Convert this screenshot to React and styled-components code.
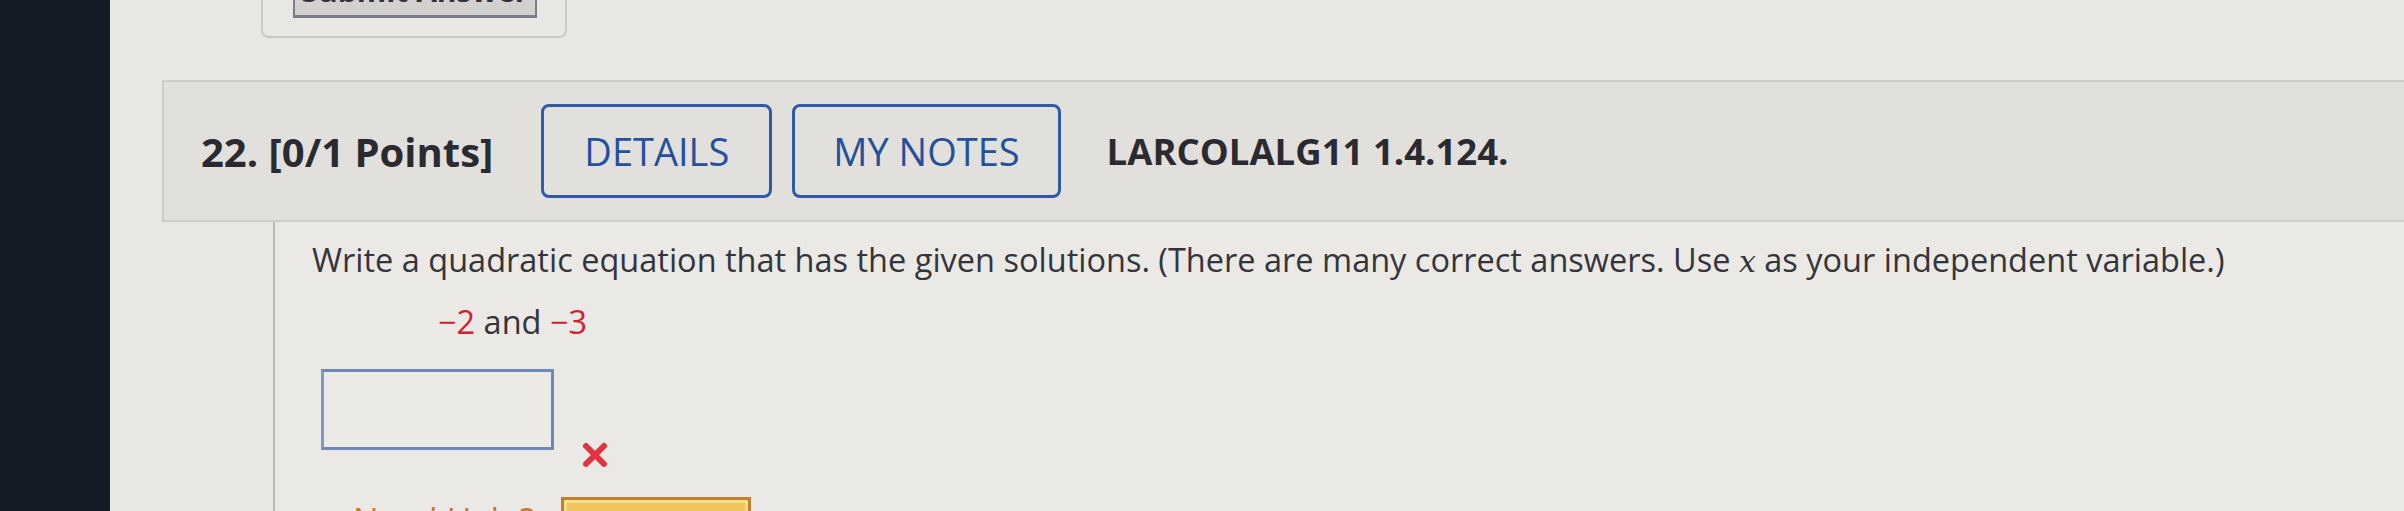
import React from 'react'
import styled, { createGlobalStyle } from 'styled-components'

const GlobalStyle = createGlobalStyle`
  html, body {
    margin: 0;
    padding: 0;
    background: #141b26;
  }
  body {
    font-family: 'Open Sans', 'DejaVu Sans', sans-serif;
    color: #2d2c34;
  }
`;

const Screen = styled.div`
  display: flex;
  height: 511px;
  overflow: hidden;
`;

const Bezel = styled.div`
  width: 110px;
  flex-shrink: 0;
  background: #141b26;
`;

const Page = styled.div`
  flex: 1;
  display: flex;
  flex-direction: column;
  background: #e8e7e3;
`;

const TopArea = styled.div`
  flex-shrink: 0;
  height: 80px;
  padding-left: 151px;
`;

const SubmitBox = styled.div`
  width: 306px;
  height: 38px;
  box-sizing: border-box;
  border: 2px solid #cac8c5;
  border-top: none;
  border-radius: 0 0 8px 8px;
  padding-left: 30px;
  overflow: hidden;
`;

const SubmitButton = styled.div`
  width: 244px;
  height: 18px;
  box-sizing: border-box;
  background: #d2d1cf;
  border: 2px solid #7d7c8c;
  border-top: none;
  border-bottom-width: 3px;
  display: flex;
  align-items: flex-end;
  justify-content: center;
  overflow: hidden;
  font-size: 30px;
  font-weight: 700;
  line-height: 1;
  color: #333;

  span {
    transform: translateY(-9px);
  }
`;

const QuestionHeader = styled.div`
  flex-shrink: 0;
  margin-left: 52px;
  height: 142px;
  box-sizing: border-box;
  border: 2px solid #cfcdca;
  border-right: none;
  background: #e1e0dc;
  display: flex;
  align-items: center;
  padding-left: 37px;
`;

const Title = styled.span`
  font-size: ${p => p.$size}px;
  font-weight: 700;
  color: #2b2a31;
  margin-right: ${p => p.$gap}px;
  white-space: nowrap;
`;

const OutlineButton = styled.button`
  height: 94px;
  padding: 0 ${p => p.$pad}px;
  margin-right: ${p => p.$gap}px;
  box-sizing: border-box;
  background: transparent;
  border: 3px solid #2f5ba6;
  border-radius: 8px;
  font-family: 'Open Sans', sans-serif;
  font-size: 38px;
  font-weight: 500;
  color: #24509c;
  white-space: nowrap;
`;

const Content = styled.div`
  flex: 1;
  margin-left: 163px;
  border-left: 2px solid #bcbab7;
  background: #eae9e5;
  padding: 16px 0 0 37px;
  display: flex;
  flex-direction: column;
`;

const Prompt = styled.p`
  margin: 0;
  font-size: 32.5px;
  line-height: 44px;
  color: #35343b;
  white-space: nowrap;

  i {
    font-family: 'DejaVu Serif', serif;
    font-size: 30px;
  }
`;

const Given = styled.p`
  margin: 16px 0 0 126px;
  font-size: 32.5px;
  line-height: 44px;
  color: #35343b;
`;

const Num = styled.span`
  color: #cf2233;
`;

const AnswerRow = styled.div`
  display: flex;
  align-items: flex-end;
  margin: 25px 0 0 9px;
  gap: 26px;
`;

const AnswerInput = styled.div`
  width: 233px;
  height: 81px;
  box-sizing: border-box;
  border: 3px solid #6d89b9;
  border-left-color: #7f98c4;
  background: #ebeae7;
`;

const WrongMark = styled.svg`
  width: 30px;
  height: 30px;
  margin-bottom: -20px;
`;

const HelpRow = styled.div`
  display: flex;
  align-items: flex-start;
  margin: 47px 0 0 41px;
  gap: 26px;
`;

const HelpLabel = styled.span`
  font-size: 34px;
  line-height: 1;
  color: #c4782c;
  padding-top: 6px;
`;

const HelpButton = styled.div`
  width: 190px;
  height: 40px;
  box-sizing: border-box;
  border: 3px solid #c0802e;
  background: #f0c65c;
  box-shadow: inset 0 0 0 3px #f7dc8c;
`;

export default function App() {
  return (
    <>
      <GlobalStyle />
      <Screen>
        <Bezel />
        <Page>
          <TopArea>
            <SubmitBox>
              <SubmitButton><span>Submit Answer</span></SubmitButton>
            </SubmitBox>
          </TopArea>

          <QuestionHeader>
            <Title $size={40} $gap={48}>22. [0/1 Points]</Title>
            <OutlineButton $pad={40} $gap={20}>DETAILS</OutlineButton>
            <OutlineButton $pad={38} $gap={46}>MY NOTES</OutlineButton>
            <Title $size={36.5} $gap={0}>LARCOLALG11 1.4.124.</Title>
          </QuestionHeader>

          <Content>
            <Prompt>
              Write a quadratic equation that has the given solutions. (There are many correct answers. Use <i>x</i> as your independent variable.)
            </Prompt>
            <Given>
              <Num>−2</Num> and <Num>−3</Num>
            </Given>
            <AnswerRow>
              <AnswerInput />
              <WrongMark viewBox="0 0 30 30">
                <path d="M6 6 L24 24 M24 6 L6 24" stroke="#e0323f" strokeWidth="6" strokeLinecap="round" />
              </WrongMark>
            </AnswerRow>
            <HelpRow>
              <HelpLabel>Need Help?</HelpLabel>
              <HelpButton />
            </HelpRow>
          </Content>
        </Page>
      </Screen>
    </>
  )
}
